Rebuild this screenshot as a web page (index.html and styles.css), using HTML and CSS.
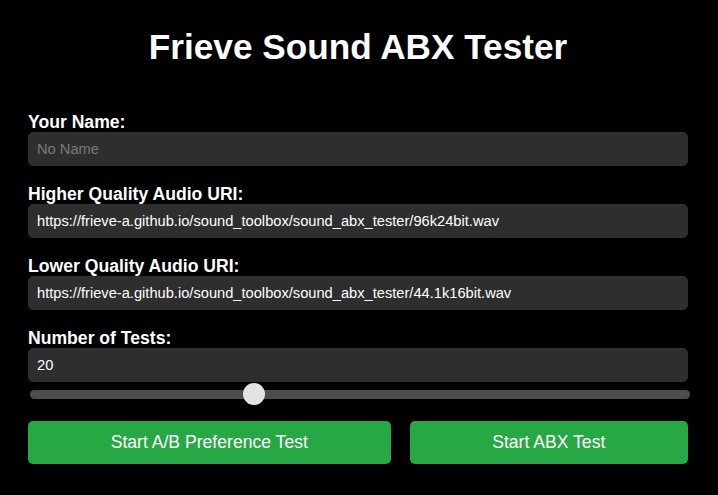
FILE: index.html
```html
<!DOCTYPE html>
<html lang="en">
<head>
<meta charset="utf-8">
<title>Frieve Sound ABX Tester</title>
<link rel="stylesheet" href="styles.css">
</head>
<body>
<main class="app">
  <h1 class="title">Frieve Sound ABX Tester</h1>
  <div class="field">
    <label class="label" for="name">Your Name:</label>
    <input class="text-input" id="name" type="text" placeholder="No Name">
  </div>
  <div class="field">
    <label class="label" for="hq">Higher Quality Audio URI:</label>
    <input class="text-input" id="hq" type="text" value="https://frieve-a.github.io/sound_toolbox/sound_abx_tester/96k24bit.wav">
  </div>
  <div class="field">
    <label class="label" for="lq">Lower Quality Audio URI:</label>
    <input class="text-input" id="lq" type="text" value="https://frieve-a.github.io/sound_toolbox/sound_abx_tester/44.1k16bit.wav">
  </div>
  <div class="field field-last">
    <label class="label" for="num">Number of Tests:</label>
    <input class="text-input" id="num" type="text" value="20">
    <input class="slider" type="range" min="5" max="50" value="20">
  </div>
  <div class="actions">
    <button class="btn">Start A/B Preference Test</button>
    <button class="btn">Start ABX Test</button>
  </div>
</main>
</body>
</html>
```
FILE: styles.css
```css
html, body {
  margin: 0;
  padding: 0;
  background: #000;
}
body {
  font-family: "Liberation Sans", Arial, sans-serif;
  color: #fff;
}
.app {
  width: 660px;
  padding: 0 30px 0 28px;
  display: flex;
  flex-direction: column;
}
.title {
  margin: 27px 0 45px;
  font-size: 35.2px;
  line-height: 40px;
  font-weight: bold;
  text-align: center;
}
.field {
  display: flex;
  flex-direction: column;
  margin-bottom: 18px;
}
.field-last {
  margin-bottom: 16px;
}
.label {
  font-size: 17.6px;
  line-height: 20px;
  font-weight: bold;
}
.text-input {
  box-sizing: border-box;
  width: 660px;
  height: 34px;
  margin: 0;
  padding: 0 8px;
  border: 1px solid #2e2e2e;
  border-radius: 5px;
  background: #2e2e2e;
  color: #fff;
  font-family: "Liberation Sans", Arial, sans-serif;
  font-size: 14.67px;
  outline: none;
}
.text-input::placeholder {
  color: #7a7a7a;
}
.slider {
  -webkit-appearance: none;
  appearance: none;
  width: 660px;
  height: 22px;
  margin: 1px 0 0 2px;
  background: transparent;
}
.slider::-webkit-slider-runnable-track {
  height: 9px;
  border-radius: 5px;
  background: #4d4d4d;
}
.slider::-webkit-slider-thumb {
  -webkit-appearance: none;
  appearance: none;
  width: 22px;
  height: 22px;
  margin-top: -6.5px;
  border-radius: 50%;
  background: #e3e3e3;
  border: none;
}
.actions {
  display: flex;
  gap: 19px;
}
.btn {
  flex: 1 1 auto;
  height: 43px;
  border: none;
  border-radius: 5px;
  background: #28a745;
  color: #fff;
  font-family: "Liberation Sans", Arial, sans-serif;
  font-size: 17.6px;
  padding: 0 10px;
}
```
